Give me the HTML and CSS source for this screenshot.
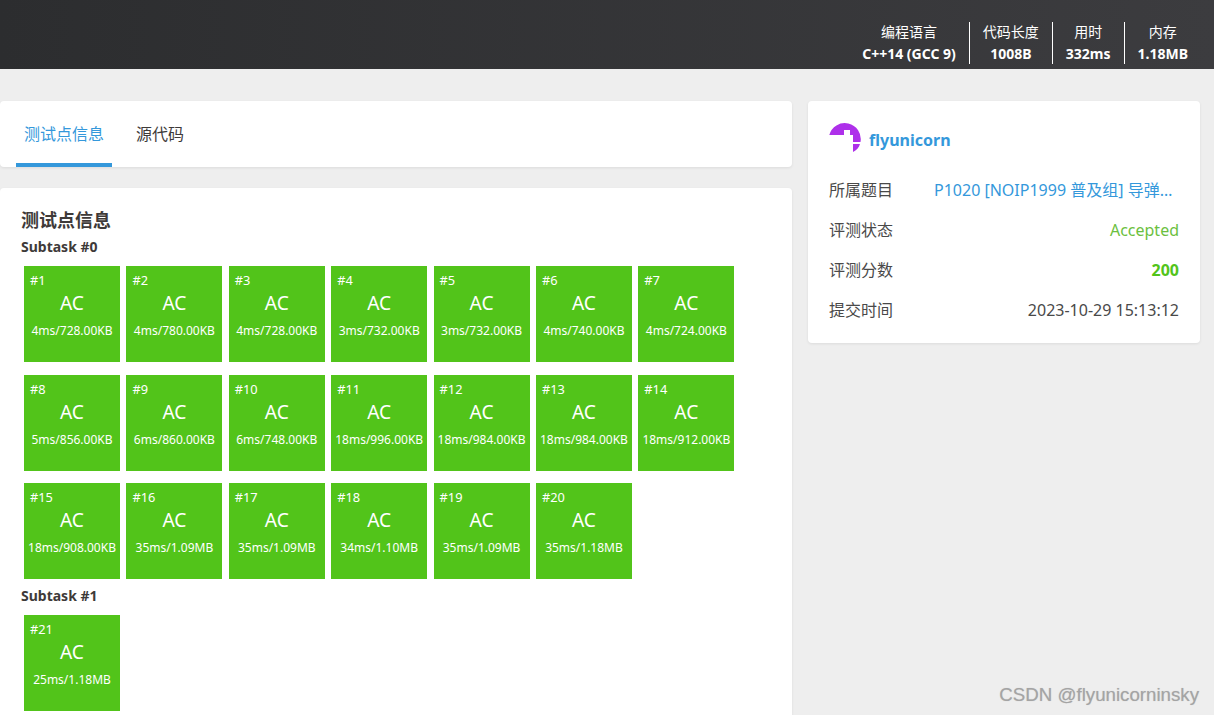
FILE: index.html
```html
<!DOCTYPE html>
<html lang="zh">
<head>
<meta charset="utf-8">
<title>测试点信息</title>
<link rel="stylesheet" href="styles.css">
</head>
<body>
<header class="topbar">
  <div class="stat"><span>编程语言</span><strong>C++14 (GCC 9)</strong></div>
  <div class="stat"><span>代码长度</span><strong>1008B</strong></div>
  <div class="stat"><span>用时</span><strong>332ms</strong></div>
  <div class="stat"><span>内存</span><strong>1.18MB</strong></div>
</header>
<main class="layout">
  <div class="left">
    <nav class="card tabs">
      <a class="tab active">测试点信息</a>
      <a class="tab">源代码</a>
    </nav>
    <section class="card cases">
      <h3>测试点信息</h3>
      <h5>Subtask #0</h5>
      <div class="grid">
        <div class="tile"><i>#1</i><b>AC</b><em>4ms/728.00KB</em></div>
        <div class="tile"><i>#2</i><b>AC</b><em>4ms/780.00KB</em></div>
        <div class="tile"><i>#3</i><b>AC</b><em>4ms/728.00KB</em></div>
        <div class="tile"><i>#4</i><b>AC</b><em>3ms/732.00KB</em></div>
        <div class="tile"><i>#5</i><b>AC</b><em>3ms/732.00KB</em></div>
        <div class="tile"><i>#6</i><b>AC</b><em>4ms/740.00KB</em></div>
        <div class="tile"><i>#7</i><b>AC</b><em>4ms/724.00KB</em></div>
        <div class="tile"><i>#8</i><b>AC</b><em>5ms/856.00KB</em></div>
        <div class="tile"><i>#9</i><b>AC</b><em>6ms/860.00KB</em></div>
        <div class="tile"><i>#10</i><b>AC</b><em>6ms/748.00KB</em></div>
        <div class="tile"><i>#11</i><b>AC</b><em>18ms/996.00KB</em></div>
        <div class="tile"><i>#12</i><b>AC</b><em>18ms/984.00KB</em></div>
        <div class="tile"><i>#13</i><b>AC</b><em>18ms/984.00KB</em></div>
        <div class="tile"><i>#14</i><b>AC</b><em>18ms/912.00KB</em></div>
        <div class="tile"><i>#15</i><b>AC</b><em>18ms/908.00KB</em></div>
        <div class="tile"><i>#16</i><b>AC</b><em>35ms/1.09MB</em></div>
        <div class="tile"><i>#17</i><b>AC</b><em>35ms/1.09MB</em></div>
        <div class="tile"><i>#18</i><b>AC</b><em>34ms/1.10MB</em></div>
        <div class="tile"><i>#19</i><b>AC</b><em>35ms/1.09MB</em></div>
        <div class="tile"><i>#20</i><b>AC</b><em>35ms/1.18MB</em></div>
      </div>
      <h5 class="second">Subtask #1</h5>
      <div class="grid">
        <div class="tile"><i>#21</i><b>AC</b><em>25ms/1.18MB</em></div>
      </div>
    </section>
  </div>
  <aside class="card info">
    <div class="user">
      <svg class="avatar" viewBox="0 0 32 30" width="32" height="30">
        <path fill="#ae30ea" d="M0.300 13A16 16 0 0 1 31.500 20H24V13H21V8H15V13Z"/>
        <path fill="#ae30ea" d="M24 22H31C30 25.500 27.500 28.500 24 30Z"/>
      </svg>
      <a class="name">flyunicorn</a>
    </div>
    <div class="row"><span>所属题目</span><a class="problem">P1020 [NOIP1999 普及组] 导弹拦截</a></div>
    <div class="row"><span>评测状态</span><span class="accepted">Accepted</span></div>
    <div class="row"><span>评测分数</span><strong class="score">200</strong></div>
    <div class="row"><span>提交时间</span><span class="time">2023-10-29 15:13:12</span></div>
  </aside>
</main>
<div class="watermark">CSDN @flyunicorninsky</div>
</body>
</html>
```
FILE: styles.css
```css
* { box-sizing: border-box; }
html, body { height: 100%; overflow: hidden; }
body {
  margin: 0;
  background: #eeeeee;
  color: #3e3a39;
  font-family: "Noto Sans", "Noto Sans CJK SC", sans-serif;
  font-size: 16px;
  position: relative;
}
.topbar {
  height: 69px;
  background: linear-gradient(90deg, #2c2d2f, #3c3c3f);
  display: flex;
  justify-content: flex-end;
  align-items: flex-end;
  padding: 0 13px 5px 0;
  color: #fff;
  font-size: 14px;
}
.stat {
  height: 42px;
  display: flex;
  flex-direction: column;
  align-items: center;
  justify-content: space-between;
  padding: 0 13px;
  line-height: 21px;
  border-left: 1px solid #fff;
}
.stat:first-child { border-left: 0; }
.stat span { margin-top: -1px; }
.stat strong { font-weight: 700; }
.layout {
  display: grid;
  grid-template-columns: 792px 392px;
  column-gap: 16px;
  padding-top: 32px;
  align-items: start;
}
.left { display: flex; flex-direction: column; gap: 21px; }
.card {
  background: #fff;
  border-radius: 4px;
  box-shadow: 0 1px 3px rgba(0, 0, 0, .08);
}
.tabs { height: 66px; display: flex; padding-left: 16px; }
.tab {
  height: 66px;
  padding: 0 8px;
  line-height: 67px;
  margin-right: 16px;
}
.tab.active { color: #3498db; border-bottom: 4px solid #3498db; }
.cases { padding: 20px 0 4px 21px; border-radius: 4px 4px 0 0; }
.cases h3 {
  margin: 0 0 4px;
  font-size: 18px;
  line-height: 24px;
  font-weight: 700;
}
.cases h5 {
  margin: 0;
  font-size: 14px;
  line-height: 22px;
  font-weight: 700;
}
.cases h5.second { margin-top: 6px; margin-bottom: 8px; }
.grid {
  display: flex;
  flex-wrap: wrap;
  width: 746px;
  margin-left: 3px;
  margin-top: 8px;
  column-gap: 6.4px;
  row-gap: 12.6px;
}
.second + .grid { margin-top: 0; }
.tile {
  width: 96px;
  height: 96px;
  background: #52c41a;
  color: #fff;
  position: relative;
  text-align: center;
  white-space: nowrap;
}
.tile i {
  position: absolute;
  left: 6px;
  top: 5px;
  font-style: normal;
  font-size: 12.800px;
  line-height: 18px;
}
.tile b {
  display: block;
  font-weight: 400;
  font-size: 19.200px;
  line-height: 26px;
  padding-top: 24px;
}
.tile em {
  display: block;
  font-style: normal;
  font-size: 12px;
  line-height: 18px;
  margin: 6px -4px 0;
}
.info { padding: 20px 21px 12px; height: 242px; }
.user { display: flex; align-items: flex-start; height: 40px; margin-bottom: 9px; }
.avatar { display: block; margin: 1px 8px 0 0; }
.name { color: #3498db; font-weight: 700; font-size: 16px; line-height: 38px; }
.row {
  display: flex;
  justify-content: space-between;
  height: 40px;
  line-height: 40px;
  font-size: 16px;
  white-space: nowrap;
  color: #494949;
}
.problem {
  color: #3498db;
  width: 239px;
  margin-right: 6px;
  overflow: hidden;
  text-overflow: ellipsis;
}
.row .accepted { color: #6cbf40; }
.row .score { color: #52c41a; font-weight: 700; }
.watermark {
  position: absolute;
  right: 15px;
  bottom: 8px;
  font-family: "Liberation Sans", Arial, sans-serif;
  font-size: 18.700px;
  line-height: 24px;
  color: #a4a4a4;
  text-shadow: 0 0 1px #c4c4c4;
}
```
